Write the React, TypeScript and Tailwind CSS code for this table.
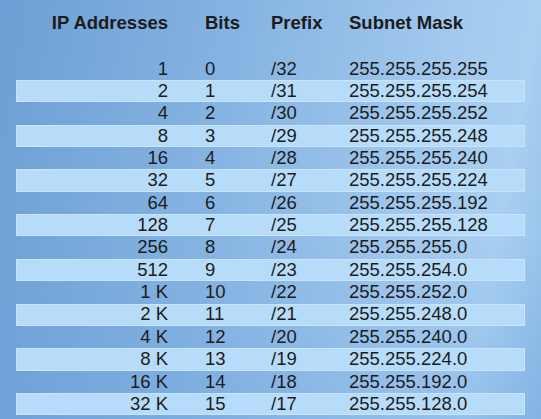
const ROWS: [string, number, string][] = [
  ["1", 0, "255.255.255.255"],
  ["2", 1, "255.255.255.254"],
  ["4", 2, "255.255.255.252"],
  ["8", 3, "255.255.255.248"],
  ["16", 4, "255.255.255.240"],
  ["32", 5, "255.255.255.224"],
  ["64", 6, "255.255.255.192"],
  ["128", 7, "255.255.255.128"],
  ["256", 8, "255.255.255.0"],
  ["512", 9, "255.255.254.0"],
  ["1 K", 10, "255.255.252.0"],
  ["2 K", 11, "255.255.248.0"],
  ["4 K", 12, "255.255.240.0"],
  ["8 K", 13, "255.255.224.0"],
  ["16 K", 14, "255.255.192.0"],
  ["32 K", 15, "255.255.128.0"],
  ["64 K", 16, "255.255.0.0"],
];

function Row({ ip, bits, mask, band }: { ip: string; bits: number; mask: string; band: boolean }) {
  return (
    <div
      className={
        "flex h-[22.36px] w-[509px] shrink-0 items-center " +
        (band ? "bg-[#b7dcfa] shadow-[inset_0_0_0_1px_#c8e5fc]" : "")
      }
    >
      <span className="w-[152px] text-right">{ip}</span>
      <span className="ml-[37px] w-[66px]">{bits}</span>
      <span className="w-[78px]">/{32 - bits}</span>
      <span>{mask}</span>
    </div>
  );
}

export default function App() {
  return (
    <div className="relative h-[419px] w-[541px] overflow-hidden bg-[linear-gradient(100deg,#6d9fd4_0%,#86b4e2_40%,#a3c9ee_75%,#a9cff1_88%,#90bde8_100%)] font-['Liberation_Sans',Arial,sans-serif] text-[18.5px] leading-none text-[#1c1c1c]">
      <div className="absolute inset-0 bg-[linear-gradient(180deg,transparent_55%,rgba(90,150,215,0.25)_100%)]" />
      <div className="relative flex flex-col pl-4">
        <div className="flex h-[46px] w-[509px] items-center font-bold">
          <span className="w-[152px] text-right">IP Addresses</span>
          <span className="ml-[37px] w-[66px]">Bits</span>
          <span className="w-[78px]">Prefix</span>
          <span>Subnet Mask</span>
        </div>
        <div className="mt-[11.6px] flex flex-col">
          {ROWS.map(([ip, bits, mask], i) => (
            <Row key={ip} ip={ip} bits={bits} mask={mask} band={i % 2 === 1} />
          ))}
        </div>
      </div>
    </div>
  );
}
